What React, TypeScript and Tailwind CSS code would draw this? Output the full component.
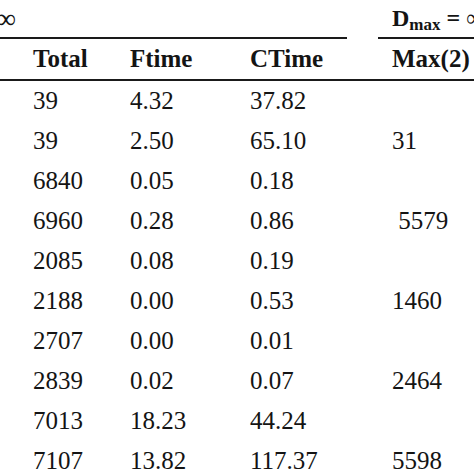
const ROWS: [string, string, string, string][] = [
  ['39', '4.32', '37.82', ''],
  ['39', '2.50', '65.10', '31'],
  ['6840', '0.05', '0.18', ''],
  ['6960', '0.28', '0.86', ' 5579'],
  ['2085', '0.08', '0.19', ''],
  ['2188', '0.00', '0.53', '1460'],
  ['2707', '0.00', '0.01', ''],
  ['2839', '0.02', '0.07', '2464'],
  ['7013', '18.23', '44.24', ''],
  ['7107', '13.82', '117.37', '5598'],
];

function Row({ cells, bold }: { cells: string[]; bold?: boolean }) {
  return (
    <div className={`flex h-[40px] shrink-0 items-center pl-[33px] leading-[40px] whitespace-pre ${bold ? 'font-bold' : ''}`}>
      <div className="w-[97px]">{cells[0]}</div>
      <div className="w-[120px]">{cells[1]}</div>
      <div className="w-[142px]">{cells[2]}</div>
      <div className="flex-1">{cells[3]}</div>
    </div>
  );
}

export default function App() {
  return (
    <div className="w-[474px] h-[474px] overflow-hidden bg-white text-[#141414] text-[25px] font-[family-name:'Liberation_Serif','Times_New_Roman',serif] flex flex-col">
      {/* spanning header, cut at both edges */}
      <div className="flex h-[39px] shrink-0">
        <div className="w-[347px] border-b-2 border-[#1a1a1a] overflow-hidden whitespace-nowrap leading-[37px]">
          <span className="ml-[-4px] text-[28px]">∞</span>
        </div>
        <div className="ml-[31px] flex-1 border-b-2 border-[#1a1a1a] overflow-hidden whitespace-nowrap pl-[14px] text-[24px] font-bold leading-[37px]">
          D<sub className="text-[17px]">max</sub> =  <span className="font-normal">∞</span>
        </div>
      </div>

      {/* column names */}
      <div className="border-b-2 border-[#1a1a1a]">
        <Row cells={['Total', 'Ftime', 'CTime', 'Max(2)']} bold />
      </div>

      {ROWS.map((r, i) => (
        <Row key={i} cells={r} />
      ))}
    </div>
  );
}
